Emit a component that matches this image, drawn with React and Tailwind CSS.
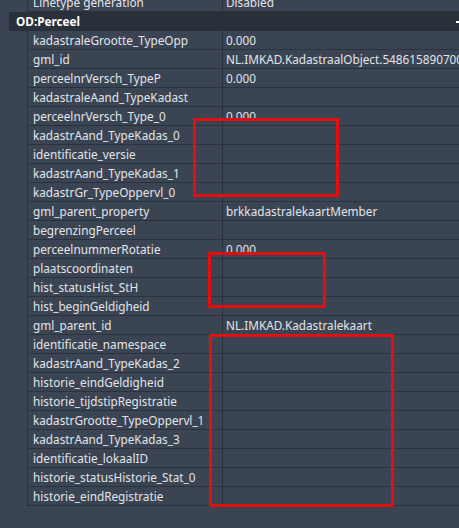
import React from 'react';

const rows = [
  ['kadastraleGrootte_TypeOpp', '0.000'],
  ['gml_id', 'NL.IMKAD.KadastraalObject.548615890700'],
  ['perceelnrVersch_TypeP', '0.000'],
  ['kadastraleAand_TypeKadast', ''],
  ['perceelnrVersch_Type_0', '0.000'],
  ['kadastrAand_TypeKadas_0', ''],
  ['identificatie_versie', ''],
  ['kadastrAand_TypeKadas_1', ''],
  ['kadastrGr_TypeOppervl_0', ''],
  ['gml_parent_property', 'brkkadastralekaartMember'],
  ['begrenzingPerceel', ''],
  ['perceelnummerRotatie', '0.000'],
  ['plaatscoordinaten', ''],
  ['hist_statusHist_StH', ''],
  ['hist_beginGeldigheid', ''],
  ['gml_parent_id', 'NL.IMKAD.Kadastralekaart'],
  ['identificatie_namespace', ''],
  ['kadastrAand_TypeKadas_2', ''],
  ['historie_eindGeldigheid', ''],
  ['historie_tijdstipRegistratie', ''],
  ['kadastrGrootte_TypeOppervl_1', ''],
  ['kadastrAand_TypeKadas_3', ''],
  ['identificatie_lokaalID', ''],
  ['historie_statusHistorie_Stat_0', ''],
  ['historie_eindRegistratie', ''],
];

function Row({ name, value }) {
  return (
    <div className="flex h-[19px] border-b border-[#2c323c] leading-[18px]">
      <div className="w-[195px] shrink-0 border-r border-[#2c323c] pl-[5px] whitespace-nowrap overflow-hidden">{name}</div>
      <div className="pl-[3px] whitespace-nowrap">{value}</div>
    </div>
  );
}

export default function App() {
  return (
    <div
      className="relative w-[459px] h-[528px] overflow-hidden bg-[#3b4453] text-[11.75px] text-[#e2e4e8]"
      style={{ fontFamily: '"Noto Sans", "Open Sans", sans-serif' }}
    >
      {/* cut-off row from the previous group */}
      <div className="-mt-[7px] ml-[27px] border-l border-[#2c323c]">
        <Row name="Linetype generation" value="Disabled" />
      </div>

      <div className="ml-[9px] h-[19px] bg-[#2a303a] flex items-center justify-between">
        <span className="pl-[7px] font-bold text-white">OD:Perceel</span>
        <span className="w-[3px] h-[2px] bg-white" />
      </div>

      <div className="ml-[27px] border-l border-[#2c323c]">
        {rows.map(([n, v]) => (
          <Row key={n} name={n} value={v} />
        ))}
      </div>

      {/* red markings drawn over the palette */}
      <div className="absolute left-[193px] top-[118px] w-[146px] h-[79px] border-[3px] border-[#e30f0f]" />
      <div className="absolute left-[208px] top-[252px] w-[118px] h-[56px] border-[3px] border-[#e30f0f]" />
      <div className="absolute left-[209px] top-[334px] w-[185px] h-[173px] border-[3px] border-[#e30f0f]" />
    </div>
  );
}
